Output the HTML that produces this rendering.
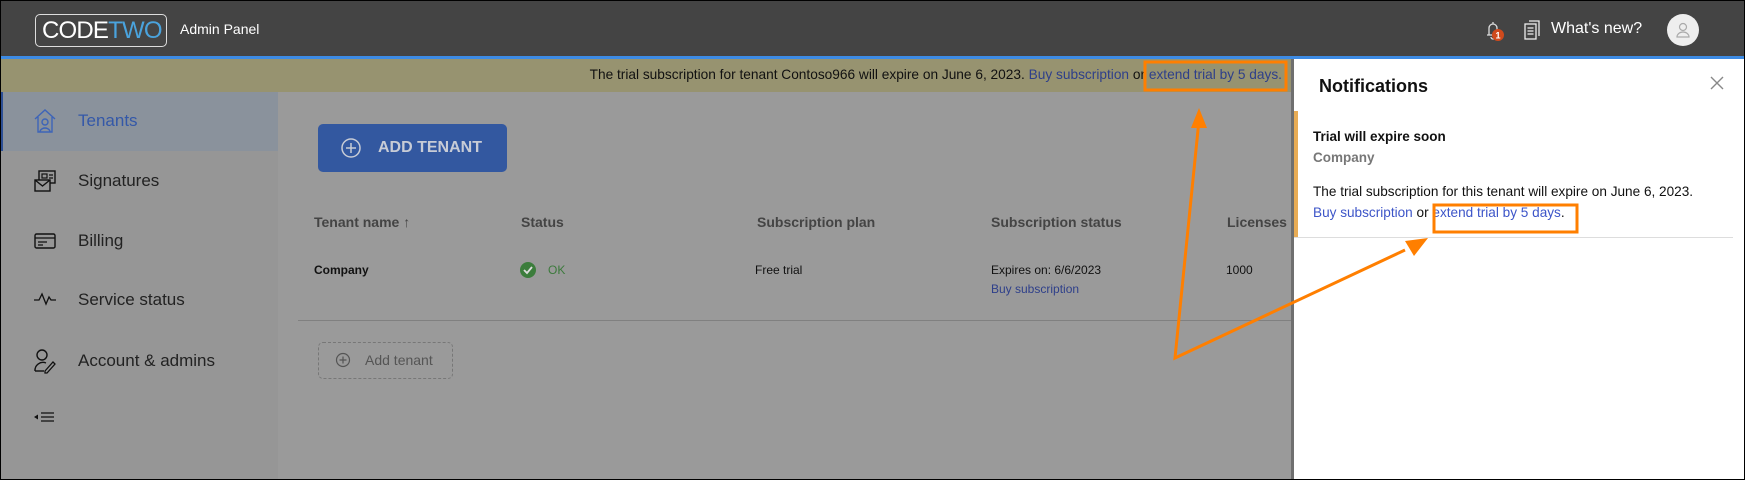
<!DOCTYPE html>
<html><head><meta charset="utf-8"><style>
*{margin:0;padding:0;box-sizing:border-box}
body{width:1745px;height:480px;overflow:hidden;font-family:"Liberation Sans",sans-serif;position:relative;background:#9a9a9a}
.a{position:absolute;white-space:nowrap}
#frame{position:absolute;left:0;top:0;width:1745px;height:480px;border:1px solid #000;pointer-events:none;z-index:50}
</style></head><body>
<div class="a" style="left:0;top:0;width:1745px;height:56px;background:#444"></div>
<div class="a" style="left:0;top:56px;width:1745px;height:3px;background:#3d8be4"></div>
<div class="a" style="left:35px;top:14px;width:132px;height:33px;border:1.5px solid #ddd;border-radius:5px"></div>
<div class="a" style="left:42px;top:17px;font-size:24px;color:#fff;letter-spacing:-0.8px">CODE<span style="color:#4aa3dd">TWO</span></div>
<div class="a" style="left:180px;top:21px;font-size:14px;color:#fff">Admin Panel</div>
<svg class="a" style="left:1482px;top:18px" width="30" height="26" viewBox="0 0 30 26"><path d="M5 17h12M7 17V10a4 4 0 0 1 8 0v7M11 6V4M9 19a2 2 0 0 0 4 0" stroke="#ddd" stroke-width="1.3" fill="none"/><circle cx="16" cy="17" r="6" fill="#d04a1c"/><text x="16" y="20.5" font-size="9" font-weight="bold" fill="#fff" text-anchor="middle" font-family="Liberation Sans">1</text></svg>
<svg class="a" style="left:1524px;top:20px" width="20" height="20" viewBox="0 0 20 20"><rect x="1" y="4" width="11" height="15" fill="none" stroke="#eee" stroke-width="1.3"/><path d="M5 1h10v15" fill="none" stroke="#eee" stroke-width="1.3"/><path d="M3.5 8h6M3.5 11h6M3.5 14h6" stroke="#eee" stroke-width="1.2"/></svg>
<div class="a" style="left:1551px;top:20px;font-size:16px;color:#fff">What's new?</div>
<div class="a" style="left:1667px;top:14px;width:32px;height:32px;border-radius:50%;background:#eee"></div>
<svg class="a" style="left:1674px;top:21px" width="18" height="18" viewBox="0 0 18 18"><circle cx="9" cy="6" r="3.5" fill="none" stroke="#aaa" stroke-width="1.2"/><path d="M3 16a6 5 0 0 1 12 0z" fill="none" stroke="#aaa" stroke-width="1.2"/></svg>
<div class="a" style="left:0;top:59px;width:1294px;height:33px;background:#979370"></div>
<div class="a" style="left:0;top:67px;width:1282px;text-align:right;font-size:13.7px;color:#111">The trial subscription for tenant Contoso966 will expire on June 6, 2023. <span style="color:#2e3f8a">Buy subscription</span> or <span style="color:#2e3f8a">extend trial by 5 days.</span></div>
<div class="a" style="left:0;top:92px;width:278px;height:388px;background:#969696"></div>
<div class="a" style="left:0;top:92px;width:278px;height:59px;background:#8a929c;border-left:3px solid #2d4f95"></div>
<svg class="a" style="left:33px;top:108px" width="24" height="26" viewBox="0 0 24 26"><path d="M2 11L12 2l10 9M5 9v15h14V9" fill="none" stroke="#3d64b8" stroke-width="1.4"/><circle cx="12" cy="14" r="3" fill="none" stroke="#3d64b8" stroke-width="1.4"/><path d="M7 24a5 4 0 0 1 10 0" fill="none" stroke="#3d64b8" stroke-width="1.4"/></svg>
<div class="a" style="left:78px;top:111px;font-size:17px;color:#3458a8">Tenants</div>
<svg class="a" style="left:33px;top:169px" width="24" height="24" viewBox="0 0 24 24"><rect x="6" y="2" width="16" height="12" fill="none" stroke="#111" stroke-width="1.4"/><rect x="9" y="5" width="5" height="4" fill="none" stroke="#111" stroke-width="1.2"/><path d="M16 6h4M16 9h4" stroke="#111" stroke-width="1.2"/><rect x="2" y="11" width="15" height="11" fill="#969696" stroke="#111" stroke-width="1.4"/><path d="M2 11l7.5 6 7.5-6" fill="none" stroke="#111" stroke-width="1.4"/></svg>
<div class="a" style="left:78px;top:171px;font-size:17px;color:#222">Signatures</div>
<svg class="a" style="left:33px;top:231px" width="24" height="20" viewBox="0 0 24 20"><rect x="2" y="3" width="20" height="14" rx="1.5" fill="none" stroke="#111" stroke-width="1.4"/><path d="M2 7h20M5 11h9M5 14h5" stroke="#111" stroke-width="1.3"/></svg>
<div class="a" style="left:78px;top:231px;font-size:17px;color:#222">Billing</div>
<svg class="a" style="left:33px;top:290px" width="24" height="18" viewBox="0 0 24 18"><path d="M1 10h5l3-6 4 10 3-7 2 3h5" fill="none" stroke="#111" stroke-width="1.3"/></svg>
<div class="a" style="left:78px;top:290px;font-size:17px;color:#222">Service status</div>
<svg class="a" style="left:33px;top:348px" width="24" height="26" viewBox="0 0 24 26"><circle cx="9" cy="7" r="5" fill="none" stroke="#111" stroke-width="1.4"/><path d="M2 23a8 8 0 0 1 11-8" fill="none" stroke="#111" stroke-width="1.4"/><path d="M12 23l8-9 2 2-8 9h-2z" fill="none" stroke="#111" stroke-width="1.3"/><path d="M2 23h9" stroke="#111" stroke-width="1.4"/></svg>
<div class="a" style="left:78px;top:351px;font-size:17px;color:#222">Account &amp; admins</div>
<svg class="a" style="left:33px;top:411px" width="24" height="14" viewBox="0 0 24 14"><path d="M1 6l4-2.5v5z" fill="#111"/><path d="M8 2h13M8 6h13M8 10h13" stroke="#111" stroke-width="1.3"/></svg>
<div class="a" style="left:318px;top:124px;width:189px;height:48px;background:#3358a0;border-radius:5px"></div>
<svg class="a" style="left:340px;top:137px" width="22" height="22" viewBox="0 0 22 22"><circle cx="11" cy="11" r="9" fill="none" stroke="#c8ccd6" stroke-width="1.5"/><path d="M11 6v10M6 11h10" stroke="#c8ccd6" stroke-width="1.5"/></svg>
<div class="a" style="left:378px;top:139px;font-size:16px;font-weight:bold;color:#c8ccd6">ADD TENANT</div>
<div class="a" style="left:314px;top:214px;font-size:14px;font-weight:bold;color:#444">Tenant name &#8593;</div>
<div class="a" style="left:521px;top:214px;font-size:14px;font-weight:bold;color:#444">Status</div>
<div class="a" style="left:757px;top:214px;font-size:14px;font-weight:bold;color:#444">Subscription plan</div>
<div class="a" style="left:991px;top:214px;font-size:14px;font-weight:bold;color:#444">Subscription status</div>
<div class="a" style="left:1227px;top:214px;font-size:14px;font-weight:bold;color:#444">Licenses</div>
<div class="a" style="left:314px;top:263px;font-size:12px;font-weight:bold;color:#111">Company</div>
<svg class="a" style="left:519px;top:261px" width="18" height="18" viewBox="0 0 18 18"><circle cx="9" cy="9" r="8" fill="#3c7d3c"/><path d="M5 9l3 3 5-6" fill="none" stroke="#ddd" stroke-width="1.8"/></svg>
<div class="a" style="left:548px;top:263px;font-size:12px;color:#3c7a3c">OK</div>
<div class="a" style="left:755px;top:263px;font-size:12px;color:#111">Free trial</div>
<div class="a" style="left:991px;top:263px;font-size:12px;color:#111">Expires on: 6/6/2023</div>
<div class="a" style="left:991px;top:282px;font-size:12px;color:#2e3f8a">Buy subscription</div>
<div class="a" style="left:1226px;top:263px;font-size:12px;color:#111">1000</div>
<div class="a" style="left:298px;top:320px;width:996px;height:1px;background:#808080"></div>
<div class="a" style="left:318px;top:342px;width:135px;height:37px;border:1px dashed #777;border-radius:5px"></div>
<svg class="a" style="left:335px;top:352px" width="16" height="16" viewBox="0 0 16 16"><circle cx="8" cy="8" r="6.5" fill="none" stroke="#555" stroke-width="1.2"/><path d="M8 4.5v7M4.5 8h7" stroke="#555" stroke-width="1.2"/></svg>
<div class="a" style="left:365px;top:352px;font-size:14px;color:#555">Add tenant</div>
<div class="a" style="left:1291px;top:59px;width:3px;height:421px;background:#6f6f6f"></div>
<div class="a" style="left:1294px;top:59px;width:451px;height:421px;background:#fff"></div>
<div class="a" style="left:1319px;top:76px;font-size:18px;font-weight:bold;color:#111">Notifications</div>
<svg class="a" style="left:1709px;top:75px" width="16" height="16" viewBox="0 0 16 16"><path d="M2 2l12 12M14 2L2 14" stroke="#888" stroke-width="1.4"/></svg>
<div class="a" style="left:1294px;top:111px;width:4px;height:126px;background:#e8ac55"></div>
<div class="a" style="left:1313px;top:129px;font-size:13.5px;font-weight:bold;color:#111">Trial will expire soon</div>
<div class="a" style="left:1313px;top:150px;font-size:13.5px;font-weight:bold;color:#777">Company</div>
<div class="a" style="left:1313px;top:184px;font-size:13.6px;color:#111">The trial subscription for this tenant will expire on June 6, 2023.</div>
<div class="a" style="left:1313px;top:205px;font-size:13.6px;color:#111"><span style="color:#3d55c8">Buy subscription</span> or <span style="color:#3d55c8">extend trial by 5 days</span>.</div>
<div class="a" style="left:1294px;top:237px;width:439px;height:1px;background:#ddd"></div>
<svg class="a" style="left:0;top:0;z-index:20" width="1745" height="480" viewBox="0 0 1745 480">
<rect x="1145" y="62" width="141" height="28" fill="none" stroke="#ff7f00" stroke-width="3"/>
<rect x="1434" y="205" width="143" height="27" fill="none" stroke="#ff7f00" stroke-width="3"/>
<polyline points="1199,120 1175,358 1405,250" fill="none" stroke="#ff7f00" stroke-width="3"/>
<path d="M1199,108 L1191,128 L1207,128 Z" fill="#ff7f00"/>
<path d="M1428,238 L1405,241 L1414,256 Z" fill="#ff7f00"/>
</svg>
<div id="frame"></div>
</body></html>
